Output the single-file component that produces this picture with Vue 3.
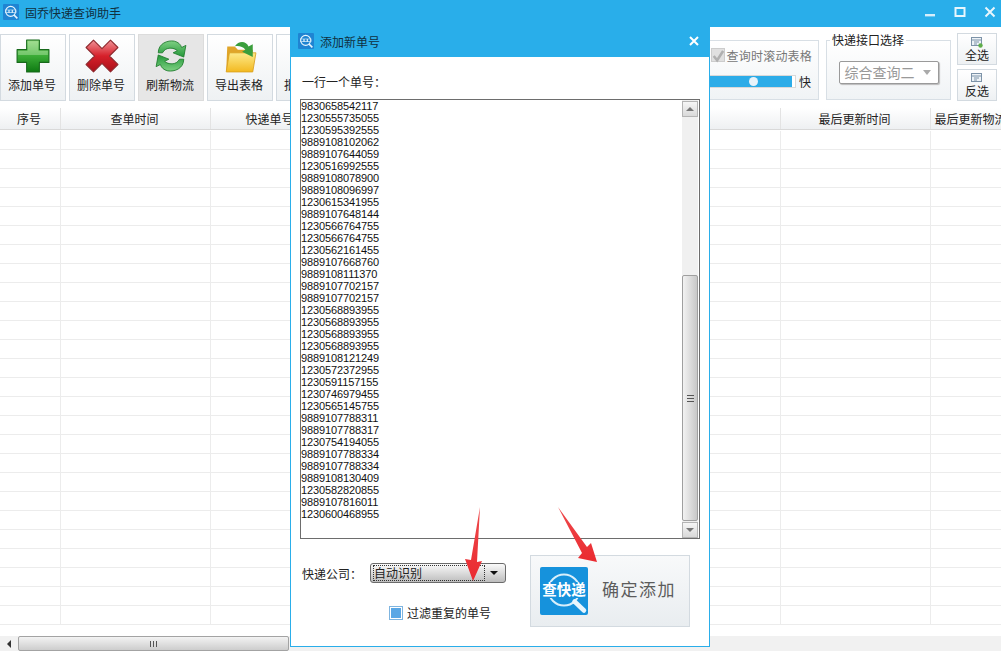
<template>
  <div class="app">
    <div class="titlebar">
      <svg class="logo" viewBox="0 0 48 48">
        <rect width="48" height="48" rx="3" fill="#1f84d2" />
        <circle cx="23" cy="22" r="15" fill="none" stroke="#e8f5fd" stroke-width="3.5" />
        <path d="M33 33 L43 43" stroke="#e8f5fd" stroke-width="5" />
        <rect x="6" y="17" width="34" height="10" fill="#cfe8f8" />
        <path d="M10 19 h6 v6 h-6 z M20 19 h6 v6 h-6 z M30 19 h6 v6 h-6 z" fill="#1f84d2" />
      </svg>
      <span class="title">固乔快递查询助手</span>
      <div class="winbtns">
        <svg width="12" height="12" viewBox="0 0 12 12"><rect x="1" y="8" width="10" height="2.4" fill="#d6eefb" /></svg>
        <svg width="12" height="12" viewBox="0 0 12 12"><rect x="1.5" y="2" width="9" height="8" fill="none" stroke="#e8f6fd" stroke-width="2" /></svg>
        <svg width="12" height="12" viewBox="0 0 12 12"><path d="M1.5 1.5 L10.5 10.5 M10.5 1.5 L1.5 10.5" stroke="#e8f6fd" stroke-width="2" /></svg>
      </div>
    </div>

    <div class="toolbar">
      <div class="tool">
        <svg class="tool-icon" viewBox="2 2 32 32">
          <defs>
            <linearGradient id="gr" x1="0" y1="0" x2="0" y2="1"><stop offset="0" stop-color="#8ed67c" /><stop offset=".45" stop-color="#3fb03a" /><stop offset="1" stop-color="#0e7a12" /></linearGradient>
          </defs>
          <path d="M12 3 H24 V12 H33 V24 H24 V33 H12 V24 H3 V12 H12 Z" fill="url(#gr)" stroke="#17691b" stroke-width="1" stroke-linejoin="round" />
          <path d="M13 4 H23 V13 H32 V17 H4 V13 H13 Z" fill="#c6ecb8" opacity=".4" />
        </svg>
        <span>添加单号</span>
      </div>
      <div class="tool">
        <svg class="tool-icon" viewBox="2 2 32 32">
          <defs>
            <linearGradient id="rd" x1="0" y1="0" x2="0" y2="1"><stop offset="0" stop-color="#f09498" /><stop offset=".5" stop-color="#d6202a" /><stop offset="1" stop-color="#a90f18" /></linearGradient>
          </defs>
          <path d="M10 3 L18 11 L26 3 L33 10 L25 18 L33 26 L26 33 L18 25 L10 33 L3 26 L11 18 L3 10 Z" fill="url(#rd)" stroke="#8e2a2f" stroke-width="1" stroke-linejoin="round" />
        </svg>
        <span>删除单号</span>
      </div>
      <div class="tool active">
        <svg class="tool-icon" viewBox="2 2 32 32">
          <defs>
            <linearGradient id="rf" x1="0" y1="0" x2="0" y2="1"><stop offset="0" stop-color="#7fd083" /><stop offset="1" stop-color="#23983a" /></linearGradient>
          </defs>
          <path d="M6 15 C6 6 15 3 21 4 C25 5 27 7 28 10 L32 8 L30 19 L20 15 L24 13 C21 10 13 9 10 15 Z" fill="url(#rf)" stroke="#1c7a2a" stroke-width=".8" />
          <path d="M6 15 C6 6 15 3 21 4 C25 5 27 7 28 10 L32 8 L30 19 L20 15 L24 13 C21 10 13 9 10 15 Z" fill="url(#rf)" stroke="#1c7a2a" stroke-width=".8" transform="rotate(180 18 18)" />
        </svg>
        <span>刷新物流</span>
      </div>
      <div class="tool">
        <svg class="tool-icon" viewBox="2 2 32 32">
          <defs>
            <linearGradient id="yl" x1="0" y1="0" x2="0" y2="1"><stop offset="0" stop-color="#fdea8a" /><stop offset="1" stop-color="#f3b920" /></linearGradient>
          </defs>
          <path d="M6 9 H13 L16 12 H30 V32 H5 Z" fill="#e0a52a" />
          <path d="M8 15 H33 L30 33 H5 Z" fill="url(#yl)" stroke="#d9a021" stroke-width=".8" />
          <path d="M13 9 C17 3 24 4 26 9 L30 7 L30 19 L20 14 L23 12 C21 9 16 8 13 9 Z" fill="#3a9e3c" />
        </svg>
        <span>导出表格</span>
      </div>
      <div class="tool"><span>批量操作</span></div>

      <div class="right-tools">
        <div class="speed-box">
          <div class="scroll-check">
            <span class="fake-check">
              <svg width="14" height="14" viewBox="0 0 14 14"><path d="M2 7 L6 12 L13 1" fill="none" stroke="#b0b0b0" stroke-width="3" /></svg>
            </span>
            <span>查询时滚动表格</span>
          </div>
          <div class="slider-row">
            <div class="slider"><i class="knob"></i></div>
            <span class="fast">快</span>
          </div>
        </div>
        <div class="api-box">
          <span class="api-legend">快递接口选择</span>
          <div class="api-select">
            <span>综合查询二</span>
            <i class="api-caret"></i>
          </div>
        </div>
        <div class="small-tools">
          <div class="small-tool">
            <svg width="12" height="11" viewBox="0 0 12 11"><rect x=".5" y=".5" width="10" height="8" fill="#eef3f7" stroke="#7d93a8" /><path d="M.5 3 H10.5 M3 5 H8 M3 7 H6" stroke="#7d93a8" /><circle cx="9.5" cy="8.5" r="2.2" fill="#5fae4a" /></svg>
            <span>全选</span>
          </div>
          <div class="small-tool">
            <svg width="12" height="11" viewBox="0 0 12 11"><rect x=".5" y=".5" width="10" height="8" fill="#eef3f7" stroke="#7d93a8" /><path d="M.5 3 H10.5 M3 5 H8 M3 7 H6" stroke="#7d93a8" /></svg>
            <span>反选</span>
          </div>
        </div>
      </div>
    </div>

    <div class="grid">
      <div class="grid-head">
        <div v-for="c in columns" :key="c.label" class="hcell" :style="{ width: c.width + 'px' }">{{ c.label }}</div>
      </div>
      <div v-for="r in 26" :key="r" class="grid-row">
        <div v-for="c in columns" :key="c.label" class="cell" :style="{ width: c.width + 'px' }"></div>
      </div>
    </div>

    <div class="hscroll">
      <div class="hs-btn"><i class="tri-left"></i></div>
      <div class="hs-thumb"><span class="grip"></span></div>
    </div>

    <!-- 添加新单号 dialog -->
    <div class="dialog">
      <div class="dialog-title">
        <svg class="logo" viewBox="0 0 48 48">
          <rect width="48" height="48" rx="3" fill="#1f84d2" />
          <circle cx="23" cy="22" r="15" fill="none" stroke="#e8f5fd" stroke-width="3.5" />
          <path d="M33 33 L43 43" stroke="#e8f5fd" stroke-width="5" />
          <rect x="6" y="17" width="34" height="10" fill="#cfe8f8" />
          <path d="M10 19 h6 v6 h-6 z M20 19 h6 v6 h-6 z M30 19 h6 v6 h-6 z" fill="#1f84d2" />
        </svg>
        <span class="title">添加新单号</span>
        <svg class="dialog-x" width="12" height="12" viewBox="0 0 12 12"><path d="M2 2 L10 10 M10 2 L2 10" stroke="#fff" stroke-width="2" /></svg>
      </div>
      <div class="dialog-body">
        <div class="hint">一行一个单号：</div>
        <div class="memo">
          <div class="memo-text">
            <div v-for="(n, i) in numbers" :key="i">{{ n }}</div>
          </div>
          <div class="vscroll">
            <div class="vs-btn"><i class="tri-up"></i></div>
            <div class="vs-track"></div>
            <div class="vs-thumb"><span class="vgrip"></span></div>
            <div class="vs-btn"><i class="tri-down"></i></div>
          </div>
        </div>
        <div class="footer">
          <div class="footer-left">
            <div class="company">
              <span>快递公司：</span>
              <div class="combo">
                <span class="combo-text">自动识别</span>
                <i class="combo-caret"></i>
              </div>
            </div>
            <div class="filter">
              <span class="check-on"><i></i></span>
              <span>过滤重复的单号</span>
            </div>
          </div>
          <div class="confirm">
            <svg class="confirm-icon" viewBox="0 0 48 48">
              <rect width="48" height="48" rx="2" fill="#1692dc" />
              <circle cx="24" cy="23" r="15.5" fill="none" stroke="#d8effb" stroke-width="2" />
              <rect x="2" y="15" width="44" height="16" fill="#1692dc" />
              <path d="M34.5 34.5 L44 43.5" stroke="#e8f6fd" stroke-width="4.5" stroke-linecap="round" />
              <text x="24" y="28" text-anchor="middle" class="logo-text">查快递</text>
            </svg>
            <span class="confirm-text">确定添加</span>
          </div>
        </div>
      </div>
    </div>

    <!-- red annotation arrows -->
    <svg class="arrows" width="1001" height="655" viewBox="0 0 1001 655">
      <defs>
        <linearGradient id="ar" x1="0" y1="0" x2="0" y2="1"><stop offset="0" stop-color="#ee4a4c" /><stop offset="1" stop-color="#ea2a30" /></linearGradient>
      </defs>
      <path d="M480 507 L477 562 L482 561 L473 581 L465 559 L471 560 Z" fill="url(#ar)" />
      <path d="M558 507 L587 547 L591 543 L597 562 L578 558 L582 553 Z" fill="url(#ar)" />
    </svg>
  </div>
</template>

<script setup>
const columns = [
  { label: '序号', width: 61 },
  { label: '查单时间', width: 150 },
  { label: '快递单号', width: 120 },
  { label: '', width: 450 },
  { label: '最后更新时间', width: 150 },
  { label: '最后更新物流', width: 82 },
]

const numbers = `9830658542117
1230555735055
1230595392555
9889108102062
9889107644059
1230516992555
9889108078900
9889108096997
1230615341955
9889107648144
1230566764755
1230566764755
1230562161455
9889107668760
9889108111370
9889107702157
9889107702157
1230568893955
1230568893955
1230568893955
1230568893955
9889108121249
1230572372955
1230591157155
1230746979455
1230565145755
9889107788311
9889107788317
1230754194055
9889107788334
9889107788334
9889108130409
1230582820855
9889107816011
1230600468955`.split('\n')
</script>

<style>
html, body { margin: 0; background: #fff; }
</style>

<style scoped>
.app {
  position: relative;
  width: 1001px;
  height: 655px;
  overflow: hidden;
  background: #fff;
  display: flex;
  flex-direction: column;
  font-family: "Noto Sans CJK SC", "Liberation Sans", sans-serif;
  font-size: 12px;
  color: #222;
}
.titlebar {
  height: 27px;
  flex: none;
  box-sizing: border-box;
  background: #29aeea;
  display: flex;
  align-items: center;
  padding: 0 0 3px 3px;
}
.logo { width: 16px; height: 16px; margin-right: 6px; flex: none; }
.title { color: #10303f; }
.winbtns {
  margin-left: auto;
  display: flex;
  gap: 18px;
  padding-right: 5px;
}
.toolbar {
  height: 81px;
  flex: none;
  display: flex;
  padding: 7px 0 0 0;
  box-sizing: border-box;
  gap: 3px;
  align-items: flex-start;
}
.tool {
  width: 66px;
  height: 67px;
  box-sizing: border-box;
  border: 1px solid #d3dae0;
  background: linear-gradient(#fff, #eef1f3);
  display: flex;
  flex-direction: column;
  align-items: center;
  justify-content: flex-end;
  padding: 0 2px 7px 0;
  flex: none;
  white-space: nowrap;
}
.tool.active { background: #e6e6e6; border-color: #dcdcdc; }
.tool-icon { width: 34px; height: 34px; margin: 0 0 3px 2px; }
.right-tools {
  margin-left: auto;
  margin-top: -1px;
  display: flex;
  gap: 6px;
  padding-right: 4px;
}
.speed-box {
  margin-top: 7px;
  margin-right: 1px;
  width: 170px;
  height: 60px;
  box-sizing: border-box;
  border: 1px solid #d8dfe5;
  background: linear-gradient(#fff, #f0f3f5);
  padding: 4px 6px 0 0;
  display: flex;
  flex-direction: column;
  align-items: flex-end;
  color: #777;
}
.scroll-check { display: flex; align-items: center; gap: 2px; height: 20px; letter-spacing: .2px; }
.fake-check {
  width: 14px;
  height: 14px;
  background: #e0e0e0;
  border: 1px solid #ccc;
  box-sizing: border-box;
  display: flex;
}
.slider-row { display: flex; align-items: center; gap: 4px; margin-top: 8px; margin-right: -4px; padding-right: 3px; color: #222; }
.slider {
  position: relative;
  width: 120px;
  height: 11px;
  background: #2cace8;
  border-right: 3px solid #fff;
  outline: 1px solid #d9d9d9;
}
.knob {
  position: absolute;
  left: 77px;
  top: 1px;
  width: 9px;
  height: 9px;
  border-radius: 50%;
  background: #e8f3fa;
}
.fast { width: 14px; }
.api-box {
  position: relative;
  margin-top: 7px;
  width: 125px;
  height: 60px;
  box-sizing: border-box;
  border: 1px solid #d8dfe5;
  background: linear-gradient(#fff, #f0f3f5);
  display: flex;
  align-items: center;
  justify-content: center;
}
.api-legend {
  position: absolute;
  left: 3px;
  top: -8px;
  background: #fff;
  padding: 0 2px;
  line-height: 14px;
  color: #222;
}
.api-select {
  margin-top: 4px;
  width: 100px;
  height: 23px;
  box-sizing: border-box;
  border: 1px solid #9a9a9a;
  border-radius: 2px;
  background: #fff;
  box-shadow: 1px 1px 1px #bbb;
  display: flex;
  align-items: center;
  justify-content: space-between;
  padding: 0 7px 0 5px;
  color: #999;
  font-size: 14px;
  white-space: nowrap;
}
.api-caret {
  width: 0;
  height: 0;
  border-left: 4px solid transparent;
  border-right: 4px solid transparent;
  border-top: 5px solid #aaa;
}
.small-tools { display: flex; flex-direction: column; gap: 4px; }
.small-tool {
  width: 40px;
  height: 32px;
  box-sizing: border-box;
  border: 1px solid #d3dae0;
  background: linear-gradient(#fff, #eef1f3);
  display: flex;
  flex-direction: column;
  align-items: center;
  line-height: 14px;
  padding-top: 3px;
}
.grid { flex: 1; overflow: hidden; min-height: 0; }
.grid-head {
  display: flex;
  height: 21px;
  margin-bottom: 1px;
  background: linear-gradient(#fff, #eef0f2);
  border-bottom: 1px solid #d9d9d9;
}
.hcell {
  flex: none;
  box-sizing: border-box;
  border-right: 1px solid #e3e3e3;
  padding-right: 2px;
  text-align: center;
  line-height: 22px;
  white-space: nowrap;
}
.grid-row { display: flex; height: 19px; box-sizing: border-box; border-bottom: 1px solid #ececec; }
.cell { flex: none; box-sizing: border-box; border-right: 1px solid #ececec; }
.hscroll {
  flex: none;
  height: 15px;
  margin-bottom: 4px;
  background: #f1f1f1;
  display: flex;
  align-items: center;
}
.hs-btn { width: 18px; display: flex; justify-content: center; }
.tri-left {
  width: 0;
  height: 0;
  border-top: 4px solid transparent;
  border-bottom: 4px solid transparent;
  border-right: 4px solid #333;
}
.hs-thumb {
  width: 271px;
  height: 15px;
  box-sizing: border-box;
  border: 1px solid #a3a3a3;
  border-radius: 2px;
  background: linear-gradient(#f3f3f3, #cdcdcd);
  display: flex;
  align-items: center;
  justify-content: center;
}
.grip {
  width: 7px;
  height: 6px;
  background: repeating-linear-gradient(90deg, #555 0 1px, transparent 1px 3px);
}
.dialog {
  position: absolute;
  left: 290px;
  top: 27px;
  width: 420px;
  height: 620px;
  box-sizing: border-box;
  background: #fff;
  border: 1px solid #2aaeea;
  border-top: none;
  display: flex;
  flex-direction: column;
}
.dialog-title {
  height: 30px;
  flex: none;
  box-sizing: border-box;
  background: #29aeea;
  display: flex;
  align-items: center;
  padding: 0 0 2px 7px;
}
.dialog-x { margin-left: auto; margin-right: 9px; }
.dialog-body {
  flex: 1;
  padding: 0 9px 0 9px;
  display: flex;
  flex-direction: column;
  min-height: 0;
}
.hint { margin: 17px 0 9px 2px; line-height: 16px; }
.memo {
  height: 440px;
  flex: none;
  box-sizing: border-box;
  border: 1px solid #6d6d6d;
  display: flex;
  justify-content: space-between;
  background: #fff;
}
.memo-text {
  font-family: "Liberation Sans", sans-serif;
  font-size: 11px;
  line-height: 12px;
  letter-spacing: -.12px;
  color: #111;
}
.vscroll {
  width: 16px;
  margin-right: 1px;
  display: flex;
  flex-direction: column;
  background: #f0f0f0;
  padding-top: 1px;
  box-sizing: border-box;
}
.vs-btn {
  height: 16px;
  flex: none;
  box-sizing: border-box;
  border: 1px solid #b4b4b4;
  background: linear-gradient(#f6f6f6, #d9d9d9);
  display: flex;
  align-items: center;
  justify-content: center;
}
.vs-track { height: 158px; flex: none; }
.vs-thumb {
  flex: 1;
  box-sizing: border-box;
  border: 1px solid #9f9f9f;
  border-radius: 2px;
  background: linear-gradient(90deg, #f2f2f2, #c8c8c8);
  display: flex;
  align-items: center;
  justify-content: center;
  margin-bottom: 1px;
}
.vgrip {
  width: 7px;
  height: 7px;
  background: repeating-linear-gradient(#555 0 1px, transparent 1px 3px);
}
.tri-up, .tri-down {
  width: 0;
  height: 0;
  border-left: 4px solid transparent;
  border-right: 4px solid transparent;
}
.tri-up { border-bottom: 4px solid #777; }
.tri-down { border-top: 4px solid #777; }
.footer {
  flex: 1;
  display: flex;
  justify-content: space-between;
  padding: 16px 10px 0 2px;
}
.footer-left { display: flex; flex-direction: column; }
.company { display: flex; align-items: center; gap: 8px; margin-top: 8px; }
.combo {
  width: 136px;
  height: 20px;
  box-sizing: border-box;
  border: 1px solid #6b6b6b;
  border-radius: 3px;
  background: linear-gradient(#fafafa, #bdbdbd);
  display: flex;
  align-items: center;
  justify-content: space-between;
  padding: 0 7px 0 2px;
}
.combo-text {
  width: 112px;
  border: 1px dotted #333;
  box-sizing: border-box;
  line-height: 14px;
  height: 16px;
}
.combo-caret {
  width: 0;
  height: 0;
  border-left: 4px solid transparent;
  border-right: 4px solid transparent;
  border-top: 4px solid #111;
}
.filter { display: flex; align-items: center; gap: 4px; margin: 21px 0 0 87px; }
.check-on {
  width: 14px;
  height: 14px;
  box-sizing: border-box;
  border: 1px solid #7fb5e0;
  background: #fff;
  display: flex;
  align-items: center;
  justify-content: center;
}
.check-on i { width: 10px; height: 10px; background: #5aa7e5; }
.confirm {
  width: 160px;
  height: 72px;
  box-sizing: border-box;
  border: 1px solid #d3dae0;
  background: linear-gradient(#f8f9fa, #e9edf0);
  display: flex;
  align-items: center;
  padding-left: 9px;
  gap: 14px;
}
.confirm-icon { width: 48px; height: 48px; flex: none; }
.logo-text {
  font-size: 14.5px;
  font-weight: 700;
  fill: #fff;
  font-family: "Noto Sans CJK SC", sans-serif;
}
.confirm-text { font-size: 17px; letter-spacing: 1.5px; color: #5c5c5c; white-space: nowrap; padding-bottom: 6px; }
.arrows { position: absolute; left: 0; top: 0; pointer-events: none; }
</style>
